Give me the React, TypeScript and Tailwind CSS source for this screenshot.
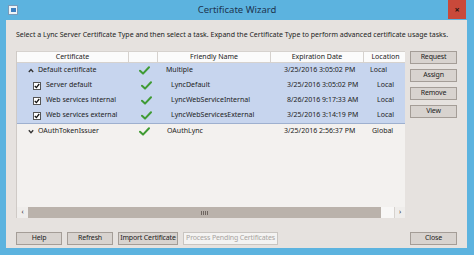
import React from "react";

const font = { fontFamily: '"Noto Sans", "Open Sans", sans-serif' };

function GreenCheck() {
  return (
    <svg width="11" height="9" viewBox="0 0 11 9">
      <path d="M1 4.8 L4 7.6 L10 1.2" fill="none" stroke="#3f9b34" strokeWidth="2" strokeLinecap="round" strokeLinejoin="round" />
    </svg>
  );
}

function Box() {
  return (
    <div className="w-[8px] h-[8px] border border-[#555] bg-white flex items-center justify-center">
      <svg width="6" height="6" viewBox="0 0 6 6">
        <path d="M0.8 3 L2.4 4.6 L5.2 1" fill="none" stroke="#111" strokeWidth="1.3" />
      </svg>
    </div>
  );
}

function Caret({ up }: { up: boolean }) {
  return (
    <svg width="6" height="5" viewBox="0 0 6 5">
      <path d={up ? "M0.8 4 L3 1.5 L5.2 4" : "M0.8 1.2 L3 3.7 L5.2 1.2"} fill="none" stroke="#333" strokeWidth="1.3" />
    </svg>
  );
}

const cols = "grid grid-cols-[112px_29px_113px_93px_43px]";

function Btn({ children, w, disabled }: { children: React.ReactNode; w: string; disabled?: boolean }) {
  return (
    <div
      className={`${w} h-[13px] flex items-center justify-center text-[7px] whitespace-nowrap overflow-hidden tracking-[-0.15px] border ${
        disabled ? "bg-[#f4f3f2] border-[#c9c5c1] text-[#a8a4a0]" : "bg-[#d8d3cf] border-[#a49d97] text-[#222]"
      }`}
    >
      {children}
    </div>
  );
}

export default function App() {
  const sub = [
    ["Server default", "LyncDefault", "3/25/2016 3:05:02 PM"],
    ["Web services internal", "LyncWebServiceInternal", "8/26/2016 9:17:33 AM"],
    ["Web services external", "LyncWebServicesExternal", "3/25/2016 3:14:19 PM"],
  ];
  return (
    <div className="w-[474px] h-[255px] bg-[#5cb3df] flex flex-col overflow-hidden" style={font}>
      <div className="h-[20px] flex items-center relative shrink-0">
        <div className="ml-[8px] w-[10px] h-[10px] bg-[#eef4f8] border border-[#7a9ab8] flex items-center justify-center">
          <div className="w-[5px] h-[4px] bg-[#3c7fc0]" />
        </div>
        <div className="flex-1 text-center text-[9.5px] text-[#1c3550] -ml-[18px]">Certificate Wizard</div>
        <div className="absolute right-[8px] top-0 w-[18px] h-[19px] bg-[#c9493a] flex items-center justify-center text-[9px] font-bold text-[#2a1410]">
          ×
        </div>
      </div>
      <div className="mx-[6px] mr-[7px] h-[228px] bg-[#e6e2df] flex flex-col px-[10px] shrink-0">
        <div className="h-[31px] flex items-center text-[7px] text-[#222] whitespace-nowrap">
          Select a Lync Server Certificate Type and then select a task. Expand the Certificate Type to perform advanced certificate usage tasks.
        </div>
        <div className="flex gap-[5px]">
          <div className="w-[390px] h-[167px] bg-[#f3f1ef] border-l border-[#cfcac6] flex flex-col text-[7px] text-[#222] overflow-hidden whitespace-nowrap">
            <div className={`${cols} h-[12px] bg-[#fbfbfb] border-b border-t border-[#d6d2ce]`}>
              <div className="flex items-center justify-center border-r border-[#d6d2ce]">Certificate</div>
              <div className="border-r border-[#d6d2ce]" />
              <div className="flex items-center justify-center border-r border-[#d6d2ce]">Friendly Name</div>
              <div className="flex items-center justify-center border-r border-[#d6d2ce]">Expiration Date</div>
              <div className="flex items-center justify-center">Location</div>
            </div>
            <div className="bg-[#c7d5ee] border-b border-[#9eb0cf]">
              <div className={`${cols} h-[15px] items-center`}>
                <div className="flex items-center pl-[11px] gap-[4px]">
                  <Caret up />
                  <span>Default certificate</span>
                </div>
                <div className="flex justify-center pl-[2px]"><GreenCheck /></div>
                <div className="pl-[8px]">Multiple</div>
                <div className="pl-[13px]">3/25/2016 3:05:02 PM</div>
                <div className="pl-[6px]">Local</div>
              </div>
              {sub.map(([a, b, c]) => (
                <div key={a} className={`${cols} h-[15px] items-center`}>
                  <div className="flex items-center pl-[16px] gap-[5px]">
                    <Box />
                    <span>{a}</span>
                  </div>
                  <div className="flex justify-center pl-[5px]"><GreenCheck /></div>
                  <div className="pl-[13px]">{b}</div>
                  <div className="pl-[16px]">{c}</div>
                  <div className="pl-[13px]">Local</div>
                </div>
              ))}
            </div>
            <div className={`${cols} h-[15px] items-center`}>
              <div className="flex items-center pl-[11px] gap-[4px]">
                <Caret up={false} />
                <span>OAuthTokenIssuer</span>
              </div>
              <div className="flex justify-center pl-[2px]"><GreenCheck /></div>
              <div className="pl-[9px]">OAuthLync</div>
              <div className="pl-[13px]">3/25/2016 2:56:37 PM</div>
              <div className="pl-[8px]">Global</div>
            </div>
            <div className="flex-1" />
            <div className="h-[11px] flex items-stretch bg-[#f3f1ef]">
              <div className="w-[11px] flex items-center justify-center text-[7px] text-[#333] bg-[#efedeb]">‹</div>
              <div className="flex-1 bg-[#bab2ab] flex items-center justify-center">
                <div className="flex gap-[1px]">
                  <div className="w-[1px] h-[4px] bg-[#6e6660]" />
                  <div className="w-[1px] h-[4px] bg-[#6e6660]" />
                  <div className="w-[1px] h-[4px] bg-[#6e6660]" />
                  <div className="w-[1px] h-[4px] bg-[#6e6660]" />
                </div>
              </div>
              <div className="w-[13px] bg-[#f8f7f6]" />
              <div className="w-[11px] flex items-center justify-center text-[7px] text-[#333] bg-[#efedeb] border-l border-[#d6d2ce]">›</div>
            </div>
          </div>
          <div className="flex flex-col gap-[5px]">
            <Btn w="w-[47px]">Request</Btn>
            <Btn w="w-[47px]">Assign</Btn>
            <Btn w="w-[47px]">Remove</Btn>
            <Btn w="w-[47px]">View</Btn>
          </div>
        </div>
        <div className="flex items-center mt-[14px]">
          <div className="flex gap-[5px]">
            <Btn w="w-[46px]">Help</Btn>
            <Btn w="w-[46px]">Refresh</Btn>
            <Btn w="w-[60px]">Import Certificate</Btn>
            <Btn w="w-[95px]" disabled>Process Pending Certificates</Btn>
          </div>
          <div className="flex-1" />
          <Btn w="w-[47px]">Close</Btn>
        </div>
      </div>
    </div>
  );
}
